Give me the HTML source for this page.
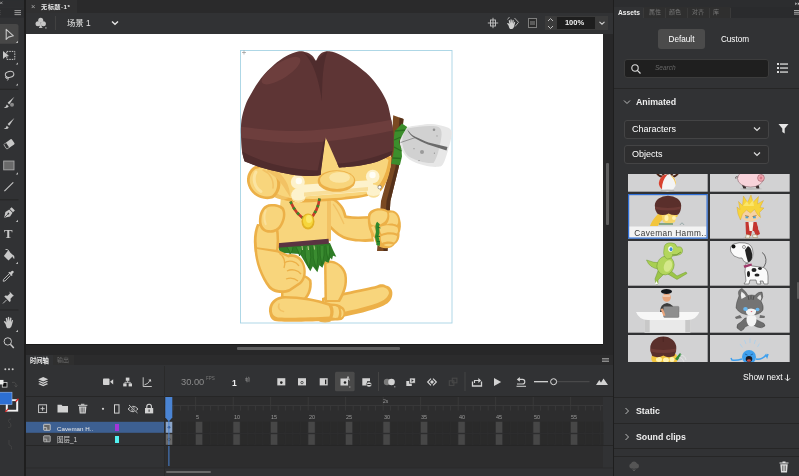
<!DOCTYPE html>
<html><head><meta charset="utf-8">
<style>
*{box-sizing:border-box;margin:0;padding:0}
html,body{width:799px;height:476px;overflow:hidden;background:#1e1e1e;font-family:"Liberation Sans","Noto Sans CJK SC",sans-serif;color:#ddd}
.a{position:absolute}
#tb{left:0;top:0;width:24.200px;height:476px;background:#313234}
#tabbar{left:25.600px;top:0;width:587.400px;height:12.500px;background:#2a2a2b}
#tab{left:26px;top:0;width:50.500px;height:12.500px;background:#303031;font-size:6px;color:#e8e8e8;line-height:13px;font-weight:bold}
#scene{left:25.600px;top:12.500px;width:587.400px;height:21px;background:#313234}
#stagebg{left:25.600px;top:33.500px;width:587.400px;height:322.500px;background:#272728}
#stage{left:25.700px;top:33.600px;width:576.900px;height:310.100px;background:#fff;box-shadow:0 1px 0 #1a1a1a}
#rp{left:614px;top:0;width:185px;height:476px;background:#313234}
#tl{left:25.600px;top:354px;width:587.400px;height:122px;background:#313234}
.t{position:absolute;white-space:nowrap;will-change:transform}
svg{will-change:transform}
.tabz{top:8px;font-size:6px;line-height:9px;color:#777}
.dd{width:145px;height:19px;background:#2e2e2f;border:1px solid #444445;border-radius:3px}
</style></head><body>
<div id="tb" class="a"><svg width="24.200" height="476" viewBox="0 0 24.200 476" style="position:absolute;left:0;top:0">
<rect x="0" y="0" width="24.200" height="7" fill="#2d2e30"/><rect x="0" y="7.500" width="24.200" height="10" fill="#2c2d2f"/>
<path d="M0 1.500 l2.500 2.500 M2.500 1.500 l-2.500 2.500" stroke="#aaa" stroke-width="0.700"/>
<path d="M0 10 v6" stroke="#555" stroke-width="1" stroke-dasharray="1 1"/>
<path d="M14.500 10.500 h6.500 M14.500 12.500 h6.500 M14.500 14.500 h6.500" stroke="#aaa" stroke-width="0.900"/>
<rect x="-3" y="24" width="21.500" height="19.700" rx="2.500" fill="#474747"/>
<path d="M6.200 29.300 v10 l2.300-2.300 l4.900-1.300z" fill="none" stroke="#c8c8c8" stroke-width="1.100" stroke-linejoin="round"/>
<path d="M18 42.8 v-2.200 l-2.200 2.200z" fill="#bbb"/>
<path d="M3 50.800 v8 l2.200-2 l3.800-0.800z" fill="#c8c8c8"/>
<rect x="6.800" y="51.300" width="8" height="8" fill="none" stroke="#c8c8c8" stroke-width="1" stroke-dasharray="1.500 1"/>
<path d="M18 64.5 v-2.200 l-2.200 2.200z" fill="#bbb"/>
<ellipse cx="9.600" cy="74.300" rx="4.300" ry="2.900" fill="none" stroke="#c8c8c8" stroke-width="1" transform="rotate(-12 9.600 74.300)"/>
<path d="M7 76.300 q-2.300 0.500 -1 1.800 q1.400 0.900 2.200-0.500 q0.500 1.500 -0.800 2.800" fill="none" stroke="#c8c8c8" stroke-width="0.900"/>
<path d="M18 85.5 v-2.200 l-2.200 2.200z" fill="#bbb"/>
<rect x="0" y="88.700" width="18.500" height="1" fill="#262626"/>
<path d="M14.400 96.800 l-6.800 6 l1.600 1.600 z" fill="#c8c8c8"/><path d="M3.800 107.600 q2.200-0.300 3-3.200 l2 2 q-1.500 2 -5 1.200z" fill="#c8c8c8"/><circle cx="12" cy="104.800" r="2" fill="#8a8a8a"/>
<path d="M14.400 118 l-6.800 6 l1.600 1.600 z" fill="#c8c8c8"/><path d="M3.800 128.800 q2.200-0.300 3-3.200 l2 2 q-1.500 2 -5 1.200z" fill="#c8c8c8"/>
<g transform="rotate(-35 9 144)"><rect x="4" y="141" width="10" height="6.200" rx="1" fill="#c8c8c8"/><rect x="4.600" y="141.600" width="2.600" height="5" fill="#313234"/></g>
<rect x="3.700" y="161" width="10.300" height="8.800" fill="#6a6a6a" stroke="#a8a8a8" stroke-width="0.900"/>
<path d="M18 174.5 v-2.200 l-2.200 2.200z" fill="#bbb"/>
<path d="M4.400 191 L13.300 182.300" stroke="#c8c8c8" stroke-width="1.100"/>
<rect x="0" y="199.300" width="18.500" height="1" fill="#262626"/>
<g transform="rotate(45 9 213)"><path d="M6.700 207 h4.600 v2.600 h-4.600z" fill="#c8c8c8"/><path d="M6.700 210.300 h4.600 l1 4.500 l-3.300 5 l-3.300-5z" fill="#c8c8c8"/><path d="M9 214 v5" stroke="#313234" stroke-width="0.700"/><circle cx="9" cy="213.800" r="0.900" fill="#313234"/></g>
<path d="M18 222 v-2.200 l-2.200 2.200z" fill="#bbb"/>
<text x="4" y="238" font-family="Liberation Serif, serif" font-weight="bold" font-size="12.800" fill="#c8c8c8">T</text>
<path d="M8 250.500 l5.500 5 l-5 5 l-4.600-4.600z" fill="#c8c8c8"/><path d="M13 255 q2 1 1.200 4 q-1.200-1 -1.800-2.500z" fill="#c8c8c8"/><path d="M5.500 249.500 q3.500-0.500 4 3.500" stroke="#c8c8c8" stroke-width="0.900" fill="none"/>
<path d="M18 264 v-2.200 l-2.200 2.200z" fill="#bbb"/>
<path d="M13.700 271.500 q-1.300-1.300 -2.600 0 l-1 1 l-0.800-0.800 l-1 1 l3.400 3.400 l1-1 l-0.800-0.800 l1-1 q1.400-1.300 0.800-1.800z" fill="#c8c8c8"/><path d="M9 274 l-5.500 5.500 l-0.300 1.800 l1.800-0.300 l5.500-5.500" fill="none" stroke="#c8c8c8" stroke-width="0.900"/>
<path d="M9.500 291.500 l4.500 4.500 l-1.200 0.400 l-2.300 2.300 l0.200 2.300 l-1 1 l-5.400-5.400 l1-1 l2.300 0.200 l2.300-2.300z" fill="#c8c8c8"/><path d="M6.500 300 l-3.500 3.500" stroke="#c8c8c8" stroke-width="0.900"/>
<rect x="0" y="309.500" width="18.500" height="1" fill="#262626"/>
<path d="M5.500 324 l-1.700-2.300 q0.700-1 1.700-0.200 l1 1 l-0.800-4.300 q0.800-0.800 1.400 0.200 l0.700 3 l0-4.200 q0.900-0.700 1.400 0.200 l0.300 4 l0.700-3.600 q0.900-0.500 1.300 0.400 l-0.400 4 l1-2.200 q0.800-0.300 1 0.500 l-1.200 4.500 q-0.500 2.500 -2.200 3.200 h-2.400 q-1 -0.800 -1.800-4.200z" fill="#c8c8c8"/>
<path d="M18 332 v-2.200 l-2.200 2.200z" fill="#bbb"/>
<circle cx="7.800" cy="341.500" r="3.700" fill="none" stroke="#c8c8c8" stroke-width="1"/><path d="M10.400 344.300 l3.400 3.700" stroke="#c8c8c8" stroke-width="1.500"/>
<circle cx="5.300" cy="369.200" r="1" fill="#c8c8c8"/><circle cx="9" cy="369.200" r="1" fill="#c8c8c8"/><circle cx="12.700" cy="369.200" r="1" fill="#c8c8c8"/>
<rect x="2.300" y="382.500" width="4.700" height="4.700" fill="#111" stroke="#ddd" stroke-width="0.800"/><rect x="-1" y="380" width="4.500" height="4.500" fill="#eee"/>
<path d="M12 382.500 q3-1 4 1.500 v3 M14.500 385.500 l1.500 1.700 l1.500-1.700" fill="none" stroke="#4c4c4c" stroke-width="0.900"/>
<rect x="6.800" y="400.300" width="10.400" height="10.400" fill="#313234" stroke="#f2f2f2" stroke-width="2"/><path d="M5.300 412 L18.500 398.800" stroke="#e02020" stroke-width="1.300"/><rect x="8" y="401.500" width="8" height="8" fill="#313234"/>
<rect x="-1" y="392.300" width="13" height="12.200" fill="#2d6fd2" stroke="#9bbcf0" stroke-width="0.600"/>
<path d="M11 419 q-3 0 -2.500 2.500 q3 2 2.500 5 q-1 1.500 -3 1" fill="none" stroke="#444" stroke-width="0.900"/>
<path d="M9 440 v5 q3 0 2.500 4.500" fill="none" stroke="#444" stroke-width="0.900"/>
</svg></div>
<div id="tabbar" class="a"></div>
<div id="tab" class="a"><span class="t" style="left:4.500px;top:-0.500px;font-weight:normal;color:#aaa;font-size:7.500px">×</span><span class="t" style="left:14.500px;top:-0.500px;letter-spacing:0.500px;font-size:6.200px">无标题-1*</span></div>
<div id="scene" class="a">
<svg class="a" style="left:9px;top:4.500px" width="13" height="13" viewBox="0 0 13 13"><g fill="#c6c6c6"><circle cx="5.700" cy="3.300" r="2.500"/><circle cx="3" cy="6.800" r="2.500"/><circle cx="8.400" cy="6.800" r="2.500"/><path d="M5.700 5 l1.300 5.500 h-2.600z"/><rect x="4" y="10" width="3.400" height="0.900"/><rect x="10.300" y="10.300" width="1.200" height="1.200"/></g></svg>
<div class="a" style="left:29.500px;top:3.500px;width:1px;height:14px;background:#414141"></div>
<span class="t" style="left:41.500px;top:3px;font-size:8.400px;line-height:14px;color:#e6e6e6">场景 1</span>
<svg class="a" style="left:85px;top:7.500px" width="8" height="6" viewBox="0 0 8 6"><path d="M1 1.500 L4 4.300 L7 1.500" fill="none" stroke="#e6e6e6" stroke-width="1.400"/></svg>
<svg class="a" style="left:461px;top:4px" width="12" height="12" viewBox="0 0 12 12"><g fill="none" stroke="#c8c8c8" stroke-width="0.900"><rect x="3.500" y="3" width="5" height="6"/><path d="M6 0.800 v10.400 M0.800 6 h10.400"/></g></svg>
<svg class="a" style="left:479px;top:3px" width="15" height="14" viewBox="0 0 15 14"><path d="M3.500 9.500 l-1.500-2 q0.600-0.900 1.500-0.200 l0.900 0.900 l-0.700-3.800 q0.700-0.700 1.200 0.200 l0.600 2.600 l0-3.700 q0.800-0.600 1.200 0.200 l0.300 3.500 l0.600-3.200 q0.800-0.400 1.100 0.400 l-0.300 3.500 l0.900-2 q0.700-0.300 0.900 0.400 l-1 4 q-0.500 2.200 -2 2.800 h-2.100 q-0.900-0.700 -1.600-3.600z" fill="#d0d0d0"/><path d="M9.500 2 l4 4.300 l-3.500 4.200" fill="none" stroke="#b0b0b0" stroke-width="1"/><path d="M2.500 3.500 l2-2.500" stroke="#b0b0b0" stroke-width="0.900"/></svg>
<div class="a" style="left:502px;top:5.500px;width:9.500px;height:9.500px;background:#2a2a2a;border:1.500px solid #7e7e7e"></div>
<div class="a" style="left:504.500px;top:8px;width:4.500px;height:4.500px;background:#5a5a5a"></div>
<div class="a" style="left:519.500px;top:3.500px;width:11px;height:14px;background:#3b3b3b"></div>
<svg class="a" style="left:521.500px;top:4px" width="7" height="13" viewBox="0 0 7 13"><path d="M1 4 L3.500 1.500 L6 4 M1 9 L3.500 11.500 L6 9" fill="none" stroke="#bdbdbd" stroke-width="1"/></svg>
<div class="a" style="left:530.500px;top:3.500px;width:40px;height:14px;background:#1e1e1e;border:1px solid #3a3a3a"></div>
<span class="t" style="left:530.500px;top:3.500px;width:40px;text-align:center;font-size:7.500px;line-height:14px;color:#f2f2f2;font-weight:bold;text-indent:-3px">100%</span>
<div class="a" style="left:570.500px;top:3.500px;width:12px;height:14px;background:#3b3b3b"></div>
<svg class="a" style="left:572px;top:7.500px" width="8" height="6" viewBox="0 0 8 6"><path d="M1.500 1.800 L4 4.200 L6.500 1.800" fill="none" stroke="#d0d0d0" stroke-width="1.100"/></svg>
</div>
<div id="stagebg" class="a"></div>
<div id="stage" class="a"></div>
<!--CHAR--><svg class="a" style="left:230px;top:40px" width="240" height="300" viewBox="230 40 240 300">
<defs>
<clipPath id="hairclip"><path id="hairp" d="M244.5 161.3 C244.1 159.6 242.6 155.4 242.0 151.0 C241.4 146.6 241.1 140.2 241.0 135.0 C240.9 129.8 240.8 125.0 241.5 120.0 C242.2 115.0 243.9 109.3 245.5 105.0 C247.1 100.7 248.4 98.5 251.0 94.0 C253.6 89.5 257.4 82.8 261.2 78.0 C265.0 73.2 269.6 68.7 273.8 65.0 C278.0 61.3 282.4 58.2 286.4 56.0 C290.4 53.8 294.7 52.1 298.0 51.5 C301.3 50.9 303.7 51.6 306.0 52.3 C308.3 53.0 310.3 54.0 312.0 55.5 C313.7 57.0 315.3 60.1 316.0 61.0 C316.5 60.1 317.8 57.0 319.0 55.5 C320.2 54.0 321.5 53.0 323.0 52.3 C324.5 51.6 326.2 51.3 328.0 51.3 C329.8 51.3 331.4 51.4 334.0 52.3 C336.6 53.2 340.1 54.6 343.8 56.7 C347.5 58.8 352.2 61.9 356.4 65.0 C360.6 68.2 365.4 72.0 369.0 75.6 C372.6 79.2 375.5 82.9 378.0 86.4 C380.5 89.9 382.5 93.2 384.2 96.4 C385.9 99.6 386.9 101.6 388.0 105.3 C389.1 109.0 390.1 114.2 391.0 118.7 C391.9 123.2 392.9 127.8 393.3 132.0 C393.7 136.2 393.7 141.0 393.6 144.0 C393.5 147.0 393.2 148.2 392.8 150.0 C392.4 151.8 391.7 154.2 391.5 155.0 C388.9 156.2 381.8 160.2 376.0 162.0 C370.2 163.8 363.2 165.1 357.0 166.0 C350.8 166.9 342.0 167.2 339.0 167.5 L325.6 137 L320.5 175 C319.1 175.2 316.1 175.9 312.0 176.0 C307.9 176.1 302.0 176.1 296.0 175.3 C290.0 174.5 282.3 172.8 276.0 171.3 C269.7 169.8 263.2 168.2 258.0 166.5 C252.8 164.8 246.8 162.2 244.5 161.3 Z"/></clipPath>
</defs>
<!-- selection box -->
<rect x="240.500" y="50.500" width="211.500" height="272.500" fill="none" stroke="#a6d3e4" stroke-width="0.900"/>
<path d="M242 52.500 h4 M244 50.500 v4" stroke="#888" stroke-width="0.600"/>
<!-- stick -->
<path d="M393.200 115.300 L403.500 119 L398.800 167 L390.400 201 L387.500 251 L377 251 L381 201 L390.400 167Z" fill="#7a4922"/>
<path d="M399.500 117.500 L403.500 119 L398.800 167 L390.400 201 L387.500 251 L383.500 251 L386.500 201 L395.500 167Z" fill="#55311a"/>
<!-- stone -->
<path d="M407.2 127 C409.3 126.7 415.9 125.5 420.0 125.0 C424.1 124.5 427.4 123.8 431.5 124.0 C435.6 124.2 441.5 125.6 444.7 126.5 C447.9 127.4 449.3 128.2 450.5 129.5 C451.7 130.8 452.2 131.2 451.8 134.5 C451.4 137.8 449.8 144.1 448.4 149.0 C447.0 153.9 445.0 160.8 443.2 163.8 C441.4 166.8 440.6 166.6 437.4 166.8 C434.2 167.1 428.7 166.5 424.0 165.3 C419.3 164.1 413.1 161.9 409.4 159.4 C405.7 156.9 403.6 153.5 402.0 150.6 C400.4 147.7 399.8 144.7 399.9 141.8 C400.0 138.9 401.3 135.5 402.5 133.0 C403.7 130.5 406.4 128.0 407.2 127.0 Z" fill="#e7e7e7"/>
<path d="M407.500 128.500 C418 126.500 428 125.500 437 126.500 C443 128 442 135 440.500 142 C439 150 437 158 433.500 163 C425 163.500 415 160.500 408 156 C403 150 401.500 144 402.500 138 C403 134 405 130.500 407.500 128.500Z" fill="#d1d1d1"/>
<path d="M400.600 142.500 L415.300 137.600" fill="none" stroke="#8a8a8a" stroke-width="0.900"/>
<path d="M407.200 129.300 C410 133 412 135.500 415.300 136.800 C420 139 424 141 428.500 142.500 L447.500 147 L446.500 150.500 L428 144.500 C423 142.500 419 140.500 414.500 138 C411 136 408.500 133 407.200 129.300Z" fill="#6a6a6a"/>
<circle cx="434" cy="129.700" r="1.300" fill="#909090"/><circle cx="437" cy="135.900" r="0.600" fill="#909090"/><circle cx="422" cy="152" r="2" fill="#9a9a9a"/><circle cx="414" cy="148.700" r="0.600" fill="#909090"/><circle cx="434.400" cy="153.200" r="0.600" fill="#909090"/><circle cx="419" cy="160.600" r="0.700" fill="#909090"/>
<!-- green ties -->
<path d="M402 123.400 L407.200 127 L403 134 L399 141.800 L401.500 149 L402 156.500 L399.900 165.300 L391 163.800 L393 156 L394 149 L393.500 140 L394.700 131.500Z" fill="#3c8e2c"/>
<path d="M395 131 L405 130 M394 140 L401 137 M394 147 L401.500 151 M392.500 158 L401 158.500" stroke="#2b6f20" stroke-width="1.300"/>
<!-- far foot -->
<path d="M322 298 C335 293.500 365 289 377 285.500 C380 283.500 384 284 386 285.500 C391 286.500 393.500 291 392 296.500 C390.500 302 386 305 379 307.500 C366 312 348 316.500 336 317.500 L322 317.500Z" fill="#ecb048"/>
<path d="M324 300.500 C337 296 366 291.500 378 288 C384 286 388.500 288.500 389 293 C388 297.500 384 300.500 377.500 303 C364 307.500 348 311.500 336 313 L324 313.500Z" fill="#f8d57c"/>
<!-- far leg -->
<path d="M324 262 C330 258 343 262 346.500 274 C348.500 285 345 293 340 302 L324.500 302Z" fill="#ecb048"/>
<path d="M326.500 264 C331 261 341 264 344 274.500 C346 284 342.500 292 338 300 L327 300Z" fill="#f8d57c"/>
<!-- near leg (thigh) -->
<path d="M281 284 C288 274 304 270 311.500 280 C313 290 309 297 304 302 L281 302Z" fill="#ecb048"/>
<path d="M283.500 285 C290 277 303 273.500 309 281 C310 289.500 306.500 296 302 300 L283.500 300Z" fill="#f8d57c"/>
<!-- shadow -->
<ellipse cx="325" cy="321" rx="6" ry="1.500" fill="#e9b55a"/>
<!-- near foot -->
<path d="M269.300 313 C267.500 303 275 296 285 296 C300 296 318 299 331 303.500 C336 303.500 340 304.500 342 306.500 C346.500 308.500 346.500 317.500 341.500 320 C330 321.500 290 322 279 321.500 C272.500 321.500 270 318 269.300 313Z" fill="#ecb048"/>
<path d="M272 311.500 C271 304 277 298.600 285.500 298.600 C300 298.600 316 301.500 328.500 305.800 C330.500 309 331 313 329.500 316.500 C315 317.500 290 318 279.500 317.500 C275 317.500 272.500 315 272 311.500Z" fill="#f8d57c"/>
<path d="M332.500 306 C335 305.700 337 306.300 338 307.500 C339.500 310.500 339.500 314.500 338 317.500 C336.500 318 334.500 318 332.500 317.500 C334 314 334 309.500 332.500 306Z" fill="#f8d57c"/>
<path d="M340.500 308.500 C342.500 309.500 343.500 311 343.500 313 C343.500 315.500 342.500 317 340.800 317.800 C341.800 315 341.800 311.500 340.500 308.500Z" fill="#f8d57c"/>
<path d="M279 304 C277.500 307.500 279.500 311 283.500 311.500" fill="none" stroke="#f2c264" stroke-width="1.600" stroke-linecap="round"/>
<!-- far arm -->
<path d="M322 197 C330 194 339 200 343.500 207.500 C345.500 211 346 214 346.500 215.500 C354 217 362 216.500 370 216 L374 241.500 C362 242.500 350 241.500 343 238.500 C336 235 330 229 326 224Z" fill="#ecb048"/>
<path d="M324 199.500 C330 197.500 337 202 341 208.500 C343 212 343.500 215.500 344.500 218 C353 219.500 362 219 369 218.500 L371.500 238.500 C361 240 351 239 344 236 C338 233 332.500 228 329 223Z" fill="#f8d57c"/>
<path d="M333 204 C338 210 341 218 344 224" fill="none" stroke="#f2c264" stroke-width="1.300"/>
<!-- torso -->
<path d="M281 197 L331 195 L331 241 L276 245Z" fill="#f8d57c"/>
<path d="M327 198 L331 197 L331 241 L327 241.300Z" fill="#f2c264"/>
<!-- skirt -->
<path d="M278 246 L330 243 L333 250 L336.300 256.700 L333 255.700 L332 259.700 L330.500 257.700 L328.500 262.700 L325 261.200 L322.400 267.800 L319.400 265.300 L317.400 272.300 L312.800 266.300 L310.300 271.300 L304.800 262 L300 254 L280 252.700Z" fill="#2f7d27"/>
<path d="M287 247 Q290 251 290 254 Q293 251 293 247 M296 247 Q299 252 299.500 256 Q302.500 252 302 247 M305 247 Q304 257 309 268 Q312 258 310 247 M313 246.500 Q312 258 316.500 269 Q319 257 317 246.500 M320 246 Q319.500 256 322 265 Q325 255 324 246 M326 245.500 Q326 253 328.300 260 Q330.500 253 329.500 245.500" fill="#3a8c30" stroke="#236a1d" stroke-width="0.700"/>
<path d="M302 246 l0.500 4 M308 246 l0.500 4 M314 245.500 l0.500 4" stroke="#f2e6b0" stroke-width="0.700"/>
<!-- belt -->
<path d="M277 243.300 L328.500 238.800 L329 243.700 L277.500 247.800Z" fill="#5b3342"/>
<!-- fist -->
<path d="M368 215 C370 208 381 206.500 388 210.500 C394 209.500 399 213 400 219 C401.500 224 401 229 399.500 233 C400 238 398 242 395 244 C393 247.500 388 249 383.500 248 C378 247 375 243 374.500 238 C370 234 367 226 368 215Z" fill="#ecb048"/>
<path d="M370.500 216 C372 210.500 381 209 387 212.500 C388.500 217 386 222 381 224 C377 226 373 226 371 224 C370 221 370 218.500 370.500 216Z" fill="#f8d57c"/>
<path d="M389 213 C393 211.500 397 214 398 219 C398.500 222 398 224 397 225 C393 223 389.500 223 386.500 224.500 C389 221 390 217 389 213Z" fill="#f8d57c"/>
<path d="M380 227 C386 224.500 393 225 397.500 227.500 C398.500 230 398 232 397 233.500 C392 231.500 386 232 381.500 234 C380 232 379.500 229.500 380 227Z" fill="#f8d57c"/>
<path d="M381 236.500 C386 234 392.500 234 397 236 C397 239 396 241 394 242.500 C390 241 385.500 241.500 382 243 C381 241 380.500 238.500 381 236.500Z" fill="#f8d57c"/>
<path d="M383.500 245 C386.500 243.500 390 243.500 393 244.500 C391 246.500 387 247 383.500 245Z" fill="#f8d57c"/>
<path d="M372.500 226.500 C374 230 376 234 377 238" fill="none" stroke="#f8d57c" stroke-width="3"/>
<path d="M378.500 223 C375 227 379.500 231 377 235 C375.500 238 379.500 241 378 245.500" fill="none" stroke="#2f8a2c" stroke-width="3.600"/>
<path d="M377.500 227 l3 1 M376.500 236 l3.500 0.500 M377 241.500 l3 0" stroke="#1f6a1f" stroke-width="0.900"/>
<!-- face -->
<path d="M262 163 C262 180 268 194 282 199.500 C292 203 305 203 320 201.500 C350 200 372 197 381 191 C388 182 391 170 391.500 157 L340 130 L300 130Z" fill="#ecb048"/>
<path d="M262 163 C262 180 270 192 283 197 C300 200 340 198 362 195 C376 192 385 182 388.500 160 L340 130 L300 130Z" fill="#f8d57c"/>
<path d="M258 168 C260 184 272 195 290 197.500 L283 200 C268 197 258 187 255 172Z" fill="#f2c264"/>
<path d="M254 166.500 C248.500 170 246 177 247.300 183 C249 190.500 254 195.500 260.500 198 C265 199.500 270 199.500 273.500 198 C280 193 282 184 279 176 C276 170 268 165 262 164.500Z" fill="#ecb048"/>
<path d="M255.500 169 C251 172 249 178 250 183 C251.500 189 255.500 193.500 261.500 195.500 C265 196.800 269 196.800 272 195.500 C277 191.500 278.500 184 276 177.500 C273.500 172 267 168 261.500 167.500Z" fill="#f8d57c"/>
<path d="M256 172 C252.500 178 254 187 261 191.500" fill="none" stroke="#fbe4a0" stroke-width="3" stroke-linecap="round"/>
<path d="M263 170 C270 173 274 180 273 188" fill="none" stroke="#f2c264" stroke-width="1.500" stroke-linecap="round"/>
<path d="M268 167 C282 172 291 185 290 197 C300 200 330 199 345 197 L345 168Z" fill="#f8d57c"/>
<path d="M272 168 C284 174 290.500 186 290 197 C285 189 279 177 266 171Z" fill="#f2c264"/>
<!-- bone -->
<g fill="#fdf2cc"><circle cx="297.800" cy="182" r="7"/><circle cx="298.500" cy="195.300" r="7.300"/><circle cx="372.700" cy="176.500" r="6.800"/><circle cx="373.400" cy="191.300" r="6.800"/><path d="M298 185 L373 180 L373 191 L298 197Z"/></g>
<path d="M304 196.500 L368 190.800 L368 187 L304 192.500Z" fill="#f8de9a"/>
<path d="M291.500 198.500 C294 203 302 204 305.500 198.500 C301 201 295 201 291.500 198.500Z M367 194 C370 198.500 377.500 199 380 194 C376 196.500 371 196.500 367 194Z" fill="#f8de9a"/>
<circle cx="298.800" cy="181" r="3.200" fill="#fffef6"/><circle cx="372.500" cy="175" r="3.200" fill="#fffef6"/>
<!-- nose -->
<ellipse cx="336.500" cy="181" rx="18.800" ry="10.800" fill="#ecb048"/>
<ellipse cx="337" cy="180" rx="17" ry="9" fill="#f8d57c"/>
<ellipse cx="339.600" cy="177.400" rx="10.400" ry="5.400" fill="#fbe6a6"/>
<circle cx="379.700" cy="187.200" r="1.800" fill="#fff" stroke="#666" stroke-width="0.600"/>
<!-- hair -->
<path d="M244.5 161.3 C244.1 159.6 242.6 155.4 242.0 151.0 C241.4 146.6 241.1 140.2 241.0 135.0 C240.9 129.8 240.8 125.0 241.5 120.0 C242.2 115.0 243.9 109.3 245.5 105.0 C247.1 100.7 248.4 98.5 251.0 94.0 C253.6 89.5 257.4 82.8 261.2 78.0 C265.0 73.2 269.6 68.7 273.8 65.0 C278.0 61.3 282.4 58.2 286.4 56.0 C290.4 53.8 294.7 52.1 298.0 51.5 C301.3 50.9 303.7 51.6 306.0 52.3 C308.3 53.0 310.3 54.0 312.0 55.5 C313.7 57.0 315.3 60.1 316.0 61.0 C316.5 60.1 317.8 57.0 319.0 55.5 C320.2 54.0 321.5 53.0 323.0 52.3 C324.5 51.6 326.2 51.3 328.0 51.3 C329.8 51.3 331.4 51.4 334.0 52.3 C336.6 53.2 340.1 54.6 343.8 56.7 C347.5 58.8 352.2 61.9 356.4 65.0 C360.6 68.2 365.4 72.0 369.0 75.6 C372.6 79.2 375.5 82.9 378.0 86.4 C380.5 89.9 382.5 93.2 384.2 96.4 C385.9 99.6 386.9 101.6 388.0 105.3 C389.1 109.0 390.1 114.2 391.0 118.7 C391.9 123.2 392.9 127.8 393.3 132.0 C393.7 136.2 393.7 141.0 393.6 144.0 C393.5 147.0 393.2 148.2 392.8 150.0 C392.4 151.8 391.7 154.2 391.5 155.0 C388.9 156.2 381.8 160.2 376.0 162.0 C370.2 163.8 363.2 165.1 357.0 166.0 C350.8 166.9 342.0 167.2 339.0 167.5 L325.6 137 L320.5 175 C319.1 175.2 316.1 175.9 312.0 176.0 C307.9 176.1 302.0 176.1 296.0 175.3 C290.0 174.5 282.3 172.8 276.0 171.3 C269.7 169.8 263.2 168.2 258.0 166.5 C252.8 164.8 246.8 162.2 244.5 161.3 Z" fill="#5e3535"/>
<g clip-path="url(#hairclip)">
<path d="M236 126 C262 130 285 131.500 300 131 C330 130 365 125 398 118.500 L398 129.500 C365 136.500 330 142.500 300 143 C285 143.500 262 141 236 137Z" fill="#6d3e3d"/>
<path d="M240 150 C262 164 295 170.500 321 170.500 L321 180 L240 180Z M337 163.500 C352 163 372 159 396 149.500 L396 175 L337 175Z" fill="#4f2c2d"/>
<ellipse cx="281" cy="70.600" rx="22.500" ry="7.800" transform="rotate(-32.600 281 70.600)" fill="#6d3e3d"/>
<path d="M300 50 C313 58 319 80 322 101.500 C322 80 323 62 328 50 L316 61Z" fill="#4f2c2d"/>
<path d="M334 52.300 C343.800 56.700 356.400 65 369 75.600 C378 86.400 388 105.300 391 118.700 L396 118 L380 70 L340 48Z" fill="#6d3e3d" opacity="0"/>
<path d="M325.600 137 L320.500 175 L316.500 176 L323.500 142Z" fill="#4f2c2d"/>
</g>
<!-- near upper arm -->
<path d="M257 224 C252.500 234 253 249 257 260 L278 255 C279.500 246 279.500 236 278 226Z" fill="#ecb048"/>
<path d="M259 226 C255.500 235 256 248 259.500 257 L275.500 253 C277 245 277 236 275.500 228Z" fill="#f8d57c"/>
<!-- near forearm + hand -->
<path d="M254.500 247 C254.500 262 261 278 268.500 288 C274 294 284 294 290 291.500 L301 284 C306.500 279.500 307 270 304 263 C301 256 294 253 288 254.500 L278 250Z" fill="#ecb048"/>
<path d="M257 249 C257.500 262 263 276.500 270.500 286 C275 291 283.500 291 289 289 L299.500 282 C304 278 304.500 270 302 264 C299 258 293.500 256 288.500 257.500 L277.500 252.500Z" fill="#f8d57c"/>
<path d="M284 263 C289 259.500 296 261 299 266 M287 271 C292 268.500 298 270 301 274 M286 279 C290 277.500 295 278.500 298 281" fill="none" stroke="#ecb048" stroke-width="1.300"/>
<path d="M279.500 253.500 C284 256 286 262 284 268" fill="none" stroke="#ecb048" stroke-width="1.300"/>
<!-- deltoid -->
<g transform="translate(272 218.500) scale(0.840 0.860) translate(-271 -218.500)">
<path d="M270 201.500 C261 201.500 256 209.500 255.500 219 C254.500 227 258 233.500 266 235 C273 236 279.500 233.500 283 227 C287 220.500 288.500 212 285 206 C281.500 202 276 201.500 270 201.500Z" fill="#ecb048"/>
<path d="M270 204.500 C263.500 204.500 259 211 258.500 219 C257.800 226 261 231 266.500 232 C272.500 232.800 277.500 230.500 280.500 225.500 C284 219.500 285.300 212.500 282.500 208 C279.500 205 275 204.500 270 204.500Z" fill="#f8d57c"/>
<path d="M263.500 209 C261.500 214 261.500 220 263.500 225" fill="none" stroke="#fae09a" stroke-width="2.400" stroke-linecap="round"/>
</g>
<!-- necklace -->
<path d="M290.500 201.500 C294 210 300 217 306 219.500 M319.500 198.500 C318.500 207 315 214 310 219" fill="none" stroke="#c63a2a" stroke-width="2.600"/>
<path d="M290.500 201.500 C294 210 300 217 306 219.500 M319.500 198.500 C318.500 207 315 214 310 219" fill="none" stroke="#3a8a2c" stroke-width="2.600" stroke-dasharray="2.500 4"/>
<ellipse cx="308" cy="221.500" rx="6.500" ry="8" fill="#e3b324"/>
<ellipse cx="308" cy="221" rx="5" ry="6.500" fill="#f6d63c"/>
<ellipse cx="309" cy="219" rx="3" ry="4" fill="#fbe76a"/>
</svg>
<!--/CHAR-->
<div class="a" style="left:237px;top:347px;width:163px;height:2.500px;background:#5e5e5e;border-radius:1px"></div>
<div class="a" style="left:606px;top:163px;width:2.500px;height:62px;background:#5e5e5e;border-radius:1px"></div>
<div id="tl" class="a"><div class="a" style="left:0;top:0;width:587px;height:1.300px;background:#272728"></div><div class="a" style="left:0;top:1.300px;width:587px;height:10.200px;background:#2b2b2c"></div><div class="a" style="left:0;top:1.300px;width:27px;height:10.200px;background:#313234"></div><div class="a" style="left:27.500px;top:1.300px;width:21px;height:10.200px;background:#2f2f2f"></div><svg class="a" style="left:0.400px;top:0" width="587" height="122" viewBox="0 0 587 122"><rect x="139.300" y="42.500" width="437.700" height="71.500" fill="#2d2d2e"/><rect x="0" y="67.800" width="139.300" height="11" fill="#3d6092"/><g fill="#d2d2d2"><path d="M17.2 23 l5 2.300 l-5 2.300 l-5-2.300z"/><path d="M12.2 27.6 l1.600-0.700 l3.400 1.600 l3.400-1.600 l1.600 0.700 l-5 2.300z"/><path d="M12.2 29.9 l1.600-0.700 l3.400 1.600 l3.400-1.600 l1.600 0.700 l-5 2.300z"/></g><rect x="77" y="24.6" width="6.500" height="6.400" rx="0.800" fill="#d2d2d2"/><path d="M84 27.8 l3.200-2.600 v5.200z" fill="#d2d2d2"/><g fill="#d2d2d2"><rect x="99.8" y="23.6" width="3.600" height="3.200"/><rect x="97.2" y="29.4" width="3.400" height="3"/><rect x="102.6" y="29.4" width="3.400" height="3"/><path d="M101.6 26.5 v2 M98.9 29.6 v-1.300 h5.400 v1.300" stroke="#d2d2d2" stroke-width="0.800" fill="none"/></g><path d="M117.2 23.3 v9.200 h8.600" fill="none" stroke="#d2d2d2" stroke-width="0.900"/><path d="M118.5 30.8 q3.500-0.500 5.500-4.300" fill="none" stroke="#d2d2d2" stroke-width="0.900"/><path d="M122.3 25.8 l2.600-0.600 l0.300 2.700z" fill="#d2d2d2"/><rect x="12.6" y="50.8" width="8" height="7.800" fill="none" stroke="#d2d2d2" stroke-width="0.900"/><path d="M16.6 52.6 v4.200 M14.5 54.7 h4.200" stroke="#d2d2d2" stroke-width="0.900"/><path d="M31.5 50.8 h4 l1 1.300 h5.500 v6.500 h-10.500z" fill="#d2d2d2"/><path d="M52 51.3 h9.400 M55 50.3 h3.400" stroke="#d2d2d2" stroke-width="1"/><path d="M53 52.5 h7.400 l-0.700 7 h-6z" fill="#d2d2d2"/><path d="M55.2 53.5 v5 M56.7 53.5 v5 M58.2 53.5 v5" stroke="#313234" stroke-width="0.600"/><circle cx="77" cy="54.8" r="1.100" fill="#d2d2d2"/><rect x="88.5" y="50.8" width="4.500" height="8.300" fill="none" stroke="#d2d2d2" stroke-width="1"/><path d="M102 55 q5-5.500 10 0 q-5 5.500 -10 0z" fill="none" stroke="#d2d2d2" stroke-width="0.900"/><circle cx="107" cy="55" r="1.700" fill="#d2d2d2"/><path d="M103 51 l8.500 8" stroke="#313234" stroke-width="2"/><path d="M103 51 l8.500 8" stroke="#d2d2d2" stroke-width="0.900"/><rect x="119" y="54" width="8.200" height="5.400" fill="#d2d2d2"/><path d="M120.8 54 v-1.500 a2.300 2.300 0 0 1 4.600 0 v1.500" fill="none" stroke="#d2d2d2" stroke-width="1.100"/><rect x="122.6" y="55.5" width="1" height="2.300" fill="#313234"/><rect x="17.7" y="70.3" width="6.500" height="6" rx="0.500" fill="#666" stroke="#dcdcdc" stroke-width="0.800"/><path d="M17.7 73.6 h3 v2.700" fill="none" stroke="#dcdcdc" stroke-width="0.700"/><rect x="17.7" y="81.8" width="6.500" height="6" rx="0.500" fill="#666" stroke="#c4c4c4" stroke-width="0.800"/><path d="M17.7 85.1 h3 v2.700" fill="none" stroke="#c4c4c4" stroke-width="0.700"/><rect x="251.3" y="24.2" width="8" height="7.200" fill="#d2d2d2"/><circle cx="255.3" cy="28.6" r="1.300" fill="#222"/><rect x="272" y="24.2" width="8" height="7.200" fill="#d2d2d2"/><circle cx="276" cy="28.6" r="1.200" fill="none" stroke="#222" stroke-width="0.700"/><rect x="293.7" y="24.2" width="8" height="7.200" fill="#d2d2d2"/><rect x="299" y="25.6" width="1.300" height="4.600" fill="#222"/><rect x="309" y="17.8" width="19.600" height="19.500" rx="1.500" fill="#4a4a4a"/><rect x="314.5" y="24.5" width="7.500" height="7" fill="#d2d2d2"/><circle cx="319" cy="28.5" r="1.300" fill="#222"/><path d="M320.5 26.5 l1.500-4 l1.500 4 M321 25.3 h2" stroke="#d2d2d2" stroke-width="0.800" fill="none"/><rect x="323.3" y="32.5" width="1" height="1" fill="#d2d2d2"/><path d="M336.3 24.2 h7.700 v3 h-3 v4.200 h-4.700z" fill="#d2d2d2"/><circle cx="343" cy="30.5" r="2.600" fill="#d2d2d2" stroke="#313234" stroke-width="0.600"/><rect x="341.3" y="30" width="3.400" height="1" fill="#222"/><rect x="352" y="18" width="1" height="19" fill="#444"/><circle cx="361" cy="28" r="3.200" fill="#7a7a7a"/><circle cx="365.5" cy="28" r="3.300" fill="#d2d2d2"/><rect x="368.3" y="32.3" width="1" height="1" fill="#d2d2d2"/><rect x="380.3" y="27" width="5.500" height="5" fill="#d2d2d2"/><rect x="383.5" y="24" width="5.800" height="5.200" fill="#d2d2d2" stroke="#313234" stroke-width="0.700"/><path d="M385.5 25.3 l2.300 1.300 l-2.300 1.300z" fill="#313234"/><path d="M405 24.7 l-3.300 3.300 l3.300 3.300 M407 24.7 l3.300 3.300 l-3.300 3.300" fill="none" stroke="#d2d2d2" stroke-width="1.200"/><path d="M404 28 l2-2 l2 2 l-2 2z" fill="#d2d2d2"/><rect x="423.3" y="26.8" width="4.600" height="4.600" fill="none" stroke="#484848" stroke-width="1.100"/><rect x="426.3" y="24.2" width="4.600" height="4.600" fill="none" stroke="#484848" stroke-width="1.100"/><rect x="438.5" y="18" width="1" height="19" fill="#444"/><path d="M446.5 27.5 v4.500 h9 v-4.500" fill="none" stroke="#d2d2d2" stroke-width="1.300"/><path d="M448.5 29 v-2.500 h4.500" fill="none" stroke="#d2d2d2" stroke-width="1.100"/><path d="M452.3 24 l2.800 2.500 l-2.800 2.500z" fill="#d2d2d2"/><path d="M468 24 l7.200 4 l-7.200 4z" fill="#d2d2d2"/><path d="M491 30 h5.500 a2.300 2.300 0 0 0 0-4.600 h-3.500" fill="none" stroke="#d2d2d2" stroke-width="1.100"/><path d="M493.8 23 l-3 2.400 l3 2.400z" fill="#d2d2d2"/><path d="M490.5 32.3 h9.500" stroke="#d2d2d2" stroke-width="1"/><path d="M508 27.7 h14" stroke="#e0e0e0" stroke-width="1.200"/><path d="M531 27.7 h32.500" stroke="#585858" stroke-width="0.800"/><circle cx="527.6" cy="27.7" r="3" fill="#313234" stroke="#e0e0e0" stroke-width="1"/><path d="M570 31 l3.300-5 l3.300 5z M573.5 31 l4-6.500 l4.500 6.500z" fill="#d2d2d2"/><rect x="139.80" y="67.8" width="6.50" height="11" fill="#2a2a2a"/><rect x="139.80" y="80.2" width="6.50" height="10.600" fill="#2a2a2a"/><rect x="139.30" y="52" width="0.700" height="4.500" fill="#3d3d3d"/><rect x="147.30" y="67.8" width="6.50" height="11" fill="#2a2a2a"/><rect x="147.30" y="80.2" width="6.50" height="10.600" fill="#2a2a2a"/><rect x="146.80" y="52" width="0.700" height="4.500" fill="#3d3d3d"/><rect x="154.80" y="67.8" width="6.50" height="11" fill="#2a2a2a"/><rect x="154.80" y="80.2" width="6.50" height="10.600" fill="#2a2a2a"/><rect x="154.30" y="52" width="0.700" height="4.500" fill="#3d3d3d"/><rect x="162.30" y="67.8" width="6.50" height="11" fill="#2a2a2a"/><rect x="162.30" y="80.2" width="6.50" height="10.600" fill="#2a2a2a"/><rect x="161.80" y="52" width="0.700" height="4.500" fill="#3d3d3d"/><rect x="169.80" y="67.8" width="6.50" height="11" fill="#474747"/><rect x="169.80" y="80.2" width="6.50" height="10.600" fill="#474747"/><rect x="169.30" y="52" width="0.700" height="4.500" fill="#3d3d3d"/><rect x="169.30" y="42.5" width="0.800" height="9" fill="#3d3d3d"/><rect x="177.30" y="67.8" width="6.50" height="11" fill="#2a2a2a"/><rect x="177.30" y="80.2" width="6.50" height="10.600" fill="#2a2a2a"/><rect x="176.80" y="52" width="0.700" height="4.500" fill="#3d3d3d"/><rect x="184.80" y="67.8" width="6.50" height="11" fill="#2a2a2a"/><rect x="184.80" y="80.2" width="6.50" height="10.600" fill="#2a2a2a"/><rect x="184.30" y="52" width="0.700" height="4.500" fill="#3d3d3d"/><rect x="192.30" y="67.8" width="6.50" height="11" fill="#2a2a2a"/><rect x="192.30" y="80.2" width="6.50" height="10.600" fill="#2a2a2a"/><rect x="191.80" y="52" width="0.700" height="4.500" fill="#3d3d3d"/><rect x="199.80" y="67.8" width="6.50" height="11" fill="#2a2a2a"/><rect x="199.80" y="80.2" width="6.50" height="10.600" fill="#2a2a2a"/><rect x="199.30" y="52" width="0.700" height="4.500" fill="#3d3d3d"/><rect x="207.30" y="67.8" width="6.50" height="11" fill="#474747"/><rect x="207.30" y="80.2" width="6.50" height="10.600" fill="#474747"/><rect x="206.80" y="52" width="0.700" height="4.500" fill="#3d3d3d"/><rect x="206.80" y="42.5" width="0.800" height="9" fill="#3d3d3d"/><rect x="214.80" y="67.8" width="6.50" height="11" fill="#2a2a2a"/><rect x="214.80" y="80.2" width="6.50" height="10.600" fill="#2a2a2a"/><rect x="214.30" y="52" width="0.700" height="4.500" fill="#3d3d3d"/><rect x="222.30" y="67.8" width="6.50" height="11" fill="#2a2a2a"/><rect x="222.30" y="80.2" width="6.50" height="10.600" fill="#2a2a2a"/><rect x="221.80" y="52" width="0.700" height="4.500" fill="#3d3d3d"/><rect x="229.80" y="67.8" width="6.50" height="11" fill="#2a2a2a"/><rect x="229.80" y="80.2" width="6.50" height="10.600" fill="#2a2a2a"/><rect x="229.30" y="52" width="0.700" height="4.500" fill="#3d3d3d"/><rect x="237.30" y="67.8" width="6.50" height="11" fill="#2a2a2a"/><rect x="237.30" y="80.2" width="6.50" height="10.600" fill="#2a2a2a"/><rect x="236.80" y="52" width="0.700" height="4.500" fill="#3d3d3d"/><rect x="244.80" y="67.8" width="6.50" height="11" fill="#474747"/><rect x="244.80" y="80.2" width="6.50" height="10.600" fill="#474747"/><rect x="244.30" y="52" width="0.700" height="4.500" fill="#3d3d3d"/><rect x="244.30" y="42.5" width="0.800" height="9" fill="#3d3d3d"/><rect x="252.30" y="67.8" width="6.50" height="11" fill="#2a2a2a"/><rect x="252.30" y="80.2" width="6.50" height="10.600" fill="#2a2a2a"/><rect x="251.80" y="52" width="0.700" height="4.500" fill="#3d3d3d"/><rect x="259.80" y="67.8" width="6.50" height="11" fill="#2a2a2a"/><rect x="259.80" y="80.2" width="6.50" height="10.600" fill="#2a2a2a"/><rect x="259.30" y="52" width="0.700" height="4.500" fill="#3d3d3d"/><rect x="267.30" y="67.8" width="6.50" height="11" fill="#2a2a2a"/><rect x="267.30" y="80.2" width="6.50" height="10.600" fill="#2a2a2a"/><rect x="266.80" y="52" width="0.700" height="4.500" fill="#3d3d3d"/><rect x="274.80" y="67.8" width="6.50" height="11" fill="#2a2a2a"/><rect x="274.80" y="80.2" width="6.50" height="10.600" fill="#2a2a2a"/><rect x="274.30" y="52" width="0.700" height="4.500" fill="#3d3d3d"/><rect x="282.30" y="67.8" width="6.50" height="11" fill="#474747"/><rect x="282.30" y="80.2" width="6.50" height="10.600" fill="#474747"/><rect x="281.80" y="52" width="0.700" height="4.500" fill="#3d3d3d"/><rect x="281.80" y="42.5" width="0.800" height="9" fill="#3d3d3d"/><rect x="289.80" y="67.8" width="6.50" height="11" fill="#2a2a2a"/><rect x="289.80" y="80.2" width="6.50" height="10.600" fill="#2a2a2a"/><rect x="289.30" y="52" width="0.700" height="4.500" fill="#3d3d3d"/><rect x="297.30" y="67.8" width="6.50" height="11" fill="#2a2a2a"/><rect x="297.30" y="80.2" width="6.50" height="10.600" fill="#2a2a2a"/><rect x="296.80" y="52" width="0.700" height="4.500" fill="#3d3d3d"/><rect x="304.80" y="67.8" width="6.50" height="11" fill="#2a2a2a"/><rect x="304.80" y="80.2" width="6.50" height="10.600" fill="#2a2a2a"/><rect x="304.30" y="52" width="0.700" height="4.500" fill="#3d3d3d"/><rect x="312.30" y="67.8" width="6.50" height="11" fill="#2a2a2a"/><rect x="312.30" y="80.2" width="6.50" height="10.600" fill="#2a2a2a"/><rect x="311.80" y="52" width="0.700" height="4.500" fill="#3d3d3d"/><rect x="319.80" y="67.8" width="6.50" height="11" fill="#474747"/><rect x="319.80" y="80.2" width="6.50" height="10.600" fill="#474747"/><rect x="319.30" y="52" width="0.700" height="4.500" fill="#3d3d3d"/><rect x="319.30" y="42.5" width="0.800" height="9" fill="#3d3d3d"/><rect x="327.30" y="67.8" width="6.50" height="11" fill="#2a2a2a"/><rect x="327.30" y="80.2" width="6.50" height="10.600" fill="#2a2a2a"/><rect x="326.80" y="52" width="0.700" height="4.500" fill="#3d3d3d"/><rect x="334.80" y="67.8" width="6.50" height="11" fill="#2a2a2a"/><rect x="334.80" y="80.2" width="6.50" height="10.600" fill="#2a2a2a"/><rect x="334.30" y="52" width="0.700" height="4.500" fill="#3d3d3d"/><rect x="342.30" y="67.8" width="6.50" height="11" fill="#2a2a2a"/><rect x="342.30" y="80.2" width="6.50" height="10.600" fill="#2a2a2a"/><rect x="341.80" y="52" width="0.700" height="4.500" fill="#3d3d3d"/><rect x="349.80" y="67.8" width="6.50" height="11" fill="#2a2a2a"/><rect x="349.80" y="80.2" width="6.50" height="10.600" fill="#2a2a2a"/><rect x="349.30" y="52" width="0.700" height="4.500" fill="#3d3d3d"/><rect x="357.30" y="67.8" width="6.50" height="11" fill="#474747"/><rect x="357.30" y="80.2" width="6.50" height="10.600" fill="#474747"/><rect x="356.80" y="52" width="0.700" height="4.500" fill="#3d3d3d"/><rect x="356.80" y="42.5" width="0.800" height="9" fill="#3d3d3d"/><rect x="364.80" y="67.8" width="6.50" height="11" fill="#2a2a2a"/><rect x="364.80" y="80.2" width="6.50" height="10.600" fill="#2a2a2a"/><rect x="364.30" y="52" width="0.700" height="4.500" fill="#3d3d3d"/><rect x="372.30" y="67.8" width="6.50" height="11" fill="#2a2a2a"/><rect x="372.30" y="80.2" width="6.50" height="10.600" fill="#2a2a2a"/><rect x="371.80" y="52" width="0.700" height="4.500" fill="#3d3d3d"/><rect x="379.80" y="67.8" width="6.50" height="11" fill="#2a2a2a"/><rect x="379.80" y="80.2" width="6.50" height="10.600" fill="#2a2a2a"/><rect x="379.30" y="52" width="0.700" height="4.500" fill="#3d3d3d"/><rect x="387.30" y="67.8" width="6.50" height="11" fill="#2a2a2a"/><rect x="387.30" y="80.2" width="6.50" height="10.600" fill="#2a2a2a"/><rect x="386.80" y="52" width="0.700" height="4.500" fill="#3d3d3d"/><rect x="394.80" y="67.8" width="6.50" height="11" fill="#474747"/><rect x="394.80" y="80.2" width="6.50" height="10.600" fill="#474747"/><rect x="394.30" y="52" width="0.700" height="4.500" fill="#3d3d3d"/><rect x="394.30" y="42.5" width="0.800" height="9" fill="#3d3d3d"/><rect x="402.30" y="67.8" width="6.50" height="11" fill="#2a2a2a"/><rect x="402.30" y="80.2" width="6.50" height="10.600" fill="#2a2a2a"/><rect x="401.80" y="52" width="0.700" height="4.500" fill="#3d3d3d"/><rect x="409.80" y="67.8" width="6.50" height="11" fill="#2a2a2a"/><rect x="409.80" y="80.2" width="6.50" height="10.600" fill="#2a2a2a"/><rect x="409.30" y="52" width="0.700" height="4.500" fill="#3d3d3d"/><rect x="417.30" y="67.8" width="6.50" height="11" fill="#2a2a2a"/><rect x="417.30" y="80.2" width="6.50" height="10.600" fill="#2a2a2a"/><rect x="416.80" y="52" width="0.700" height="4.500" fill="#3d3d3d"/><rect x="424.80" y="67.8" width="6.50" height="11" fill="#2a2a2a"/><rect x="424.80" y="80.2" width="6.50" height="10.600" fill="#2a2a2a"/><rect x="424.30" y="52" width="0.700" height="4.500" fill="#3d3d3d"/><rect x="432.30" y="67.8" width="6.50" height="11" fill="#474747"/><rect x="432.30" y="80.2" width="6.50" height="10.600" fill="#474747"/><rect x="431.80" y="52" width="0.700" height="4.500" fill="#3d3d3d"/><rect x="431.80" y="42.5" width="0.800" height="9" fill="#3d3d3d"/><rect x="439.80" y="67.8" width="6.50" height="11" fill="#2a2a2a"/><rect x="439.80" y="80.2" width="6.50" height="10.600" fill="#2a2a2a"/><rect x="439.30" y="52" width="0.700" height="4.500" fill="#3d3d3d"/><rect x="447.30" y="67.8" width="6.50" height="11" fill="#2a2a2a"/><rect x="447.30" y="80.2" width="6.50" height="10.600" fill="#2a2a2a"/><rect x="446.80" y="52" width="0.700" height="4.500" fill="#3d3d3d"/><rect x="454.80" y="67.8" width="6.50" height="11" fill="#2a2a2a"/><rect x="454.80" y="80.2" width="6.50" height="10.600" fill="#2a2a2a"/><rect x="454.30" y="52" width="0.700" height="4.500" fill="#3d3d3d"/><rect x="462.30" y="67.8" width="6.50" height="11" fill="#2a2a2a"/><rect x="462.30" y="80.2" width="6.50" height="10.600" fill="#2a2a2a"/><rect x="461.80" y="52" width="0.700" height="4.500" fill="#3d3d3d"/><rect x="469.80" y="67.8" width="6.50" height="11" fill="#474747"/><rect x="469.80" y="80.2" width="6.50" height="10.600" fill="#474747"/><rect x="469.30" y="52" width="0.700" height="4.500" fill="#3d3d3d"/><rect x="469.30" y="42.5" width="0.800" height="9" fill="#3d3d3d"/><rect x="477.30" y="67.8" width="6.50" height="11" fill="#2a2a2a"/><rect x="477.30" y="80.2" width="6.50" height="10.600" fill="#2a2a2a"/><rect x="476.80" y="52" width="0.700" height="4.500" fill="#3d3d3d"/><rect x="484.80" y="67.8" width="6.50" height="11" fill="#2a2a2a"/><rect x="484.80" y="80.2" width="6.50" height="10.600" fill="#2a2a2a"/><rect x="484.30" y="52" width="0.700" height="4.500" fill="#3d3d3d"/><rect x="492.30" y="67.8" width="6.50" height="11" fill="#2a2a2a"/><rect x="492.30" y="80.2" width="6.50" height="10.600" fill="#2a2a2a"/><rect x="491.80" y="52" width="0.700" height="4.500" fill="#3d3d3d"/><rect x="499.80" y="67.8" width="6.50" height="11" fill="#2a2a2a"/><rect x="499.80" y="80.2" width="6.50" height="10.600" fill="#2a2a2a"/><rect x="499.30" y="52" width="0.700" height="4.500" fill="#3d3d3d"/><rect x="507.30" y="67.8" width="6.50" height="11" fill="#474747"/><rect x="507.30" y="80.2" width="6.50" height="10.600" fill="#474747"/><rect x="506.80" y="52" width="0.700" height="4.500" fill="#3d3d3d"/><rect x="506.80" y="42.5" width="0.800" height="9" fill="#3d3d3d"/><rect x="514.80" y="67.8" width="6.50" height="11" fill="#2a2a2a"/><rect x="514.80" y="80.2" width="6.50" height="10.600" fill="#2a2a2a"/><rect x="514.30" y="52" width="0.700" height="4.500" fill="#3d3d3d"/><rect x="522.30" y="67.8" width="6.50" height="11" fill="#2a2a2a"/><rect x="522.30" y="80.2" width="6.50" height="10.600" fill="#2a2a2a"/><rect x="521.80" y="52" width="0.700" height="4.500" fill="#3d3d3d"/><rect x="529.80" y="67.8" width="6.50" height="11" fill="#2a2a2a"/><rect x="529.80" y="80.2" width="6.50" height="10.600" fill="#2a2a2a"/><rect x="529.30" y="52" width="0.700" height="4.500" fill="#3d3d3d"/><rect x="537.30" y="67.8" width="6.50" height="11" fill="#2a2a2a"/><rect x="537.30" y="80.2" width="6.50" height="10.600" fill="#2a2a2a"/><rect x="536.80" y="52" width="0.700" height="4.500" fill="#3d3d3d"/><rect x="544.80" y="67.8" width="6.50" height="11" fill="#474747"/><rect x="544.80" y="80.2" width="6.50" height="10.600" fill="#474747"/><rect x="544.30" y="52" width="0.700" height="4.500" fill="#3d3d3d"/><rect x="544.30" y="42.5" width="0.800" height="9" fill="#3d3d3d"/><rect x="552.30" y="67.8" width="6.50" height="11" fill="#2a2a2a"/><rect x="552.30" y="80.2" width="6.50" height="10.600" fill="#2a2a2a"/><rect x="551.80" y="52" width="0.700" height="4.500" fill="#3d3d3d"/><rect x="559.80" y="67.8" width="6.50" height="11" fill="#2a2a2a"/><rect x="559.80" y="80.2" width="6.50" height="10.600" fill="#2a2a2a"/><rect x="559.30" y="52" width="0.700" height="4.500" fill="#3d3d3d"/><rect x="567.30" y="67.8" width="6.50" height="11" fill="#2a2a2a"/><rect x="567.30" y="80.2" width="6.50" height="10.600" fill="#2a2a2a"/><rect x="566.80" y="52" width="0.700" height="4.500" fill="#3d3d3d"/><rect x="574.80" y="67.8" width="2.70" height="11" fill="#2a2a2a"/><rect x="574.80" y="80.2" width="2.70" height="10.600" fill="#2a2a2a"/><rect x="574.30" y="52" width="0.700" height="4.500" fill="#3d3d3d"/><rect x="139.3" y="67.8" width="437.7" height="23" fill="#313234" fill-opacity="0"/><rect x="139.3" y="51.3" width="437.7" height="0.700" fill="#3e3e3e"/><rect x="139.8" y="67.8" width="6.500" height="11" fill="#8aa4c8"/><circle cx="143" cy="73.3" r="1.300" fill="#2a4a80"/><rect x="139.8" y="80.2" width="6.500" height="10.600" fill="#6a6a6a"/><circle cx="143" cy="85.5" r="1.300" fill="none" stroke="#333" stroke-width="0.600"/><path d="M139.3 43 q0-0.700 0.700-0.700 h5.600 q0.700 0 0.700 0.700 v20.500 l-3.500 4 l-3.500-4z" fill="#4a84d4"/><rect x="142.4" y="67" width="1" height="45" fill="#4a84d4"/><rect x="0" y="113.5" width="587" height="0.800" fill="#2a2a2a"/><rect x="140" y="117" width="45" height="2" rx="1" fill="#6a6a6a"/></svg><span class="t" style="left:4px;top:1.500px;font-size:6.300px;line-height:9px;font-weight:bold;color:#f0f0f0">时间轴</span><span class="t" style="left:31.500px;top:1.500px;font-size:6px;line-height:9px;color:#6e6e6e">输出</span><div class="a" style="left:576.7px;top:4.3px;width:6.600px;height:1px;background:#8a8a8a;box-shadow:0 1.500px 0 #8a8a8a,0 3px 0 #8a8a8a"></div><div class="a" style="left:0;top:41.6px;width:587px;height:1px;background:#262626"></div><div class="a" style="left:0;top:90.8px;width:587px;height:1px;background:#262626"></div><span class="t" style="left:31.5px;top:69.500px;font-size:6.200px;line-height:10px;color:#e8e8e8">Caveman H..</span><span class="t" style="left:31.5px;top:81.200px;font-size:6.500px;line-height:10px;color:#d0d0d0">图层_1</span><div class="a" style="left:89.9px;top:69.8px;width:3.500px;height:7.300px;background:#a335d8"></div><div class="a" style="left:89.9px;top:81.5px;width:3.500px;height:7.500px;background:#52f0f0"></div><div class="a" style="left:138.3px;top:12px;width:1px;height:110px;background:#2a2a2a"></div><span class="t" style="left:155.3px;top:22px;font-size:9.300px;line-height:12px;color:#8c8c8c">30.00</span><span class="t" style="left:180.5px;top:21.5px;font-size:4.500px;line-height:6px;color:#777">FPS</span><span class="t" style="left:206px;top:22.5px;font-size:8.500px;line-height:12px;color:#f0f0f0;font-weight:bold">1</span><span class="t" style="left:219.5px;top:21.5px;font-size:5px;line-height:7px;color:#999">帧</span><span class="t" style="left:170.50px;top:58.5px;font-size:5.500px;line-height:8px;color:#9a9a9a">5</span><span class="t" style="left:208.00px;top:58.5px;font-size:5.500px;line-height:8px;color:#9a9a9a">10</span><span class="t" style="left:245.50px;top:58.5px;font-size:5.500px;line-height:8px;color:#9a9a9a">15</span><span class="t" style="left:283.00px;top:58.5px;font-size:5.500px;line-height:8px;color:#9a9a9a">20</span><span class="t" style="left:320.50px;top:58.5px;font-size:5.500px;line-height:8px;color:#9a9a9a">25</span><span class="t" style="left:358.00px;top:58.5px;font-size:5.500px;line-height:8px;color:#9a9a9a">30</span><span class="t" style="left:395.50px;top:58.5px;font-size:5.500px;line-height:8px;color:#9a9a9a">35</span><span class="t" style="left:433.00px;top:58.5px;font-size:5.500px;line-height:8px;color:#9a9a9a">40</span><span class="t" style="left:470.50px;top:58.5px;font-size:5.500px;line-height:8px;color:#9a9a9a">45</span><span class="t" style="left:508.00px;top:58.5px;font-size:5.500px;line-height:8px;color:#9a9a9a">50</span><span class="t" style="left:545.50px;top:58.5px;font-size:5.500px;line-height:8px;color:#9a9a9a">55</span><span class="t" style="left:357.5px;top:43.5px;font-size:5px;line-height:7px;color:#9a9a9a">2s</span></div>
<div id="rp" class="a">
<div class="a" style="left:0;top:0;width:185px;height:7px;background:#2c2d2f"></div>
<div class="a" style="left:0;top:7px;width:185px;height:11px;background:#2a2b2d"></div>
<div class="a" style="left:0;top:7px;width:30px;height:11px;background:#313234"></div>
<div class="a" style="left:30px;top:7px;width:87px;height:11px;background:#2f2f2f"></div>
<div class="a" style="left:29px;top:8px;width:1px;height:10px;background:#3a3a3a"></div>
<div class="a" style="left:51px;top:8px;width:1px;height:10px;background:#3a3a3a"></div>
<div class="a" style="left:73px;top:8px;width:1px;height:10px;background:#3a3a3a"></div>
<div class="a" style="left:95px;top:8px;width:1px;height:10px;background:#3a3a3a"></div>
<div class="a" style="left:116px;top:8px;width:1px;height:10px;background:#3a3a3a"></div>
<span class="t" style="left:4px;top:8px;font-size:6.700px;line-height:9px;font-weight:bold;color:#f0f0f0">Assets</span>
<span class="t tabz" style="left:35px">属性</span>
<span class="t tabz" style="left:55px">颜色</span>
<span class="t tabz" style="left:77.5px">对齐</span>
<span class="t tabz" style="left:99px">库</span>
<svg class="a" style="left:180.500px;top:1.800px" width="5" height="4" viewBox="0 0 5 4"><path d="M0.300 0.300 L2 1.800 L0.300 3.300Z M2.800 0.300 L4.500 1.800 L2.800 3.300Z" fill="#c8c8c8"/></svg>
<div class="a" style="left:179.800px;top:10.200px;width:6px;height:1.100px;background:#aaa;box-shadow:0 1.800px 0 #aaa,0 3.600px 0 #aaa"></div>
<div class="a" style="left:44px;top:29px;width:47px;height:20px;background:#4b4b4b;border-radius:3px"></div>
<span class="t" style="left:44px;top:30px;width:47px;text-align:center;font-size:8.200px;line-height:20px;color:#fff">Default</span>
<span class="t" style="left:97px;top:30px;width:48px;text-align:center;font-size:8.200px;line-height:20px;color:#fff">Custom</span>
<div class="a" style="left:10px;top:59px;width:145px;height:19px;background:#1f1f1f;border:1px solid #3c3c3c;border-radius:3px"></div>
<svg class="a" style="left:16px;top:63px" width="12" height="12" viewBox="0 0 12 12"><circle cx="5" cy="5" r="3.2" fill="none" stroke="#ddd" stroke-width="1.1"/><path d="M7.3 7.3 L10.5 10.5" stroke="#ddd" stroke-width="1.2"/></svg>
<span class="t" style="left:41px;top:63px;font-size:6.5px;line-height:10px;color:#666;font-style:italic">Search</span>
<svg class="a" style="left:163px;top:62px" width="12" height="12" viewBox="0 0 12 12"><g fill="#ddd"><rect x="0" y="1" width="2" height="2"/><rect x="0" y="5" width="2" height="2"/><rect x="0" y="9" width="2" height="2"/><rect x="3" y="1.4" width="8" height="1.3"/><rect x="3" y="5.4" width="8" height="1.3"/><rect x="3" y="9.4" width="8" height="1.3"/></g></svg>
<div class="a" style="left:0;top:88px;width:185px;height:1px;background:#262626"></div>
<svg class="a" style="left:9px;top:98px" width="8" height="8" viewBox="0 0 8 8"><path d="M1 2.5 L4 5.5 L7 2.5" fill="none" stroke="#bbb" stroke-width="1"/></svg>
<span class="t" style="left:21.5px;top:96px;font-size:8.800px;line-height:12px;font-weight:bold;color:#eee">Animated</span>
<div class="a dd" style="left:10px;top:119.5px"></div>
<span class="t" style="left:18px;top:123px;font-size:9px;line-height:12px;color:#fff">Characters</span>
<svg class="a" style="left:139px;top:125px" width="8" height="8" viewBox="0 0 8 8"><path d="M1 2.5 L4 5.5 L7 2.5" fill="none" stroke="#ddd" stroke-width="1.2"/></svg>
<svg class="a" style="left:164px;top:123px" width="11" height="12" viewBox="0 0 11 12"><path d="M0.5 1 H10.5 L6.7 5.5 V10.5 L4.3 9 V5.5 Z" fill="#e6e6e6"/></svg>
<div class="a dd" style="left:10px;top:144.5px"></div>
<span class="t" style="left:18px;top:148px;font-size:9px;line-height:12px;color:#fff">Objects</span>
<svg class="a" style="left:139px;top:150px" width="8" height="8" viewBox="0 0 8 8"><path d="M1 2.5 L4 5.5 L7 2.5" fill="none" stroke="#ddd" stroke-width="1.2"/></svg>
<div class="a" style="left:0;top:173.600px;width:185px;height:188.300px;overflow:hidden"><svg class="a" style="left:14px;top:-26.7px" width="79.7" height="44.7" viewBox="0 0 79.7 44.7"><rect width="79.7" height="44.7" fill="#d2d2d3"/><path d="M29 26.500 q3 4 7.500 3 M50 26.500 q-3 4 -7.500 3 M33.500 25 l3.500 5 M45.500 25 l-3.500 5 M39.500 25 v3" stroke="#4a2416" stroke-width="2" fill="none"/>
<circle cx="39.5" cy="36" r="8.5" fill="#f4f4f4"/><path d="M39.5 27.5 A8.5 8.5 0 0 0 34 42.5 Q33.5 34 39.5 27.5Z" fill="#d8412f"/><path d="M42 28 A8.5 8.5 0 0 1 47.5 38.5 Q47 32 42 28Z" fill="#f2c14a"/><ellipse cx="39.5" cy="43.5" rx="7" ry="1" fill="#bbb"/></svg><svg class="a" style="left:96px;top:-26.7px" width="79.7" height="44.7" viewBox="0 0 79.7 44.7"><rect width="79.7" height="44.7" fill="#d2d2d3"/><ellipse cx="41" cy="42" rx="11" ry="0.900" fill="#bdbdbd"/><path d="M32 38 l1.400 3.400 h2.800 l-0.500-3z M45 38.500 l1.600 3 h2.800 l-0.600-3.200z" fill="#3a3030"/><ellipse cx="40.500" cy="31.500" rx="13" ry="8.600" fill="#f8d3da" stroke="#6a4a50" stroke-width="0.500"/><circle cx="51" cy="31" r="3.400" fill="#f3a9b3" stroke="#8a4a55" stroke-width="0.500"/><circle cx="51" cy="31" r="1.400" fill="#d97a88"/><path d="M27.800 30 q-3-1 -1.800 1.800" stroke="#4a3a3a" stroke-width="0.800" fill="none"/></svg><svg class="a" style="left:14px;top:20.4px" width="79.7" height="44.7" viewBox="0 0 79.7 44.7"><rect width="79.7" height="44.7" fill="#d2d2d3"/><path d="M30 20 q-6 6 -8 12 h8 q2-6 8-8 q8 2 12-2 l-4-6z" fill="#f2c53d"/><path d="M33 19 h16 l-2 9 q-6 3 -12 0z" fill="#f6d56a"/><ellipse cx="38.5" cy="24" rx="2" ry="3" fill="#fff3b0"/><ellipse cx="46" cy="24" rx="2" ry="2" fill="#fff3b0"/><path d="M40 11.5 m-13.2 0 a13.2 9.8 0 0 1 26.4 0 q0 6 -3 9 q-5 1.5 -9.5 -1 q-6 3 -11.5 0 q-2.4 -3 -2.4 -8z" fill="#5a2f2b"/><path d="M27 12.5 q13 3 26 0 v2.5 q-13 3 -26 0z" fill="#6d3a35"/><path d="M31 30 h14" stroke="#3a7a3a" stroke-width="1"/><path d="M52 31 q2-4 4 0" stroke="#9aa" stroke-width="1" fill="none"/>
<rect x="1" y="32.5" width="77.7" height="11.5" fill="#fff" fill-opacity="0.72"/><text x="6.300" y="41.800" font-family="Liberation Sans, sans-serif" font-size="8.300" letter-spacing="0.400" fill="#363636">Caveman Hamm..</text>
<rect x="0.6" y="0.6" width="78.5" height="43.5" fill="none" stroke="#2f6fd8" stroke-width="1.2"/></svg><svg class="a" style="left:96px;top:20.4px" width="79.7" height="44.7" viewBox="0 0 79.7 44.7"><rect width="79.7" height="44.7" fill="#d2d2d3"/><ellipse cx="41" cy="43.800" rx="8" ry="0.800" fill="#bbb"/>
<path d="M35.500 28 h11 l3.500 12 l-4 2 l-2-5 l-2 0 l-1 5 l-5-1.500z" fill="#c4352f"/><path d="M38.500 28 h5 l-1 9 h-3z" fill="#f6f0e8"/><path d="M34.500 29 l-3 6 l2 1.500z M47.500 29 l3 6 l-2 1.500z" fill="#d8d0d0"/>
<path d="M36.500 40.500 l3.500 0.500 l-0.500 3 h-4z M42.500 41 l4-0.500 l1 3 h-4.500z" fill="#f4f2ea" stroke="#8a6a2a" stroke-width="0.400"/>
<path d="M31.500 17 h17.500 v7 q-8.500 7 -17.500 0z" fill="#f5d2a4"/>
<path d="M28 20 l-1-7 l3 2.500 l-1.500-8 l4 4 l1-9.500 l4 6.500 l3.500-7.500 l2 7.500 l5.500-6 l-1 7.500 l6-3.500 l-3.500 7 l4 0.500 l-4.500 4.500 l1 5 l-3-3 l-3-5 l-4 3.500 l-4-3 l-4 4 l-2 6z" fill="#f7d43c" stroke="#d9a520" stroke-width="0.400"/>
<path d="M33 12 l4-5 l2 4 l4-5 l1 6z" fill="#fbe66a"/>
<rect x="35.500" y="22.300" width="2.800" height="2" fill="#4aa3d8"/><rect x="43" y="22.300" width="2.800" height="2" fill="#4aa3d8"/>
<path d="M35 21.500 l4 1 M46.500 21.500 l-4 1" stroke="#8a5a20" stroke-width="0.600"/></svg><svg class="a" style="left:14px;top:67.5px" width="79.7" height="44.7" viewBox="0 0 79.7 44.7"><rect width="79.7" height="44.7" fill="#d2d2d3"/><path d="M18.5 19 q3 8 12 9 l3-6 q-8 0 -15-3z" fill="#a9cf52" stroke="#6f9a30" stroke-width="0.5"/><path d="M30 30 l-3 8 l1 5 l2 0 l0-4 l6-6z" fill="#9cc548" stroke="#6f9a30" stroke-width="0.5"/><path d="M42 29 l7 6 l9-4 l1 1.5 l-10 6 l-10-6z" fill="#9cc548" stroke="#6f9a30" stroke-width="0.5"/><ellipse cx="37.5" cy="24.5" rx="8.5" ry="9.5" fill="#b3d65c" stroke="#6f9a30" stroke-width="0.5" transform="rotate(20 37.5 24.5)"/><ellipse cx="40" cy="25" rx="4" ry="6" fill="#d4e88a" transform="rotate(20 40 25)"/><path d="M36 8 q0-7 8-6 q4 0 5 4 q5-1 5.5 3 q0.5 4 -4 5 l-6 1 q-1 3 -5 3 q-5-2 -3.500-10z" fill="#b3d65c" stroke="#6f9a30" stroke-width="0.5"/><path d="M44 14 q5 1 9-3" stroke="#4a6a20" stroke-width="0.6" fill="none"/><ellipse cx="42.500" cy="8" rx="2.300" ry="2.800" fill="#fff"/><ellipse cx="43" cy="8.2" rx="1.500" ry="2" fill="#3f8fd8"/><path d="M27 43 l1.500-3 l1.500 3z" fill="#fff"/></svg><svg class="a" style="left:96px;top:67.5px" width="79.7" height="44.7" viewBox="0 0 79.7 44.7"><rect width="79.7" height="44.7" fill="#d2d2d3"/><path d="M52 28 q6-6 3-13 q-1-2.500 -3-3.500" stroke="#333" stroke-width="0.7" fill="none"/><path d="M36 22 q-2 8 0 18 l-2 3 h5 l1-4 h6 l1 4 h4 l-1-3 h3 l1 3 h4 l0-8 q0-9 -8-9 l-8-1 z" fill="#fafafa" stroke="#333" stroke-width="0.5"/><path d="M24 3 q-5 2 -3 8 q2 5 8 6 l3 0 q1 4 5 5 q6-2 6-10 q0-9 -8-10 q-6-1 -11 1z" fill="#fafafa" stroke="#333" stroke-width="0.5"/><path d="M38 5 q5 3 4 12 q-1 4 -4 4 q-2-6 -3-12z" fill="#222"/><circle cx="23.500" cy="5.500" r="2" fill="#111"/><circle cx="34" cy="6" r="1.500" fill="#fff" stroke="#333" stroke-width="0.5"/><path d="M33.500 24.500 l8-2 l0.500 2 l-7.500 2.500z" fill="#a03a6a"/><ellipse cx="44" cy="29" rx="2.500" ry="2" fill="#222"/><ellipse cx="50" cy="27.500" rx="2" ry="1.500" fill="#222"/><ellipse cx="47" cy="34" rx="2.500" ry="1.500" fill="#222"/><ellipse cx="38.500" cy="33" rx="1.500" ry="3" fill="#222"/></svg><svg class="a" style="left:14px;top:114.6px" width="79.7" height="44.7" viewBox="0 0 79.7 44.7"><rect width="79.7" height="44.7" fill="#d2d2d3"/><path d="M16.700 32 h45.600 v12.700 h-45.600z" fill="#e9e9e9"/><rect x="16.700" y="32" width="5" height="12.700" fill="#c8c8c8"/><rect x="57.300" y="32" width="5" height="12.700" fill="#c8c8c8"/><path d="M8 24 h63.400 q-3 8 -12 8 h-39.400 q-9 0 -12-8z" fill="#f7f7f7"/><path d="M32 24 q0-8 7-9 q7 1 8 9z" fill="#3c3c3c"/><circle cx="38.700" cy="9.500" r="4.200" fill="#e9a57c"/><ellipse cx="38.500" cy="3.500" rx="5.500" ry="2.600" fill="#16181c"/><path d="M35 8 h7" stroke="#f4e0d0" stroke-width="1.200"/><rect x="35.600" y="18.400" width="15.400" height="11" rx="0.800" fill="#8e8e8e" stroke="#6a6a6a" stroke-width="0.400"/><path d="M32.500 21 l3 7 l2-0.500 l-2.500-7z" fill="#e9a57c"/></svg><svg class="a" style="left:96px;top:114.6px" width="79.7" height="44.7" viewBox="0 0 79.7 44.7"><rect width="79.7" height="44.7" fill="#d2d2d3"/><path d="M31 34 q-5 2 -4 6 l4 3 q3-1 4-4 l6-3 l6 3 q5 2 8-1 q0-3 -4-4 l-8-4 h-8z" fill="#6e6e6e" stroke="#333" stroke-width="0.400"/><ellipse cx="41.500" cy="32" rx="5" ry="6.500" fill="#f4f4f4"/><path d="M30 27 l-5 2 l1 2 l6-1z M50 27 l5 1 l-0.500 2 l-5 0z" fill="#6e6e6e"/><path d="M29 8 q-2-6 3-7.500 q4 3 6 7 q4-1 7 0 q3-4 7-3.500 q2 5 -1 9 q3 5 2 9 q-3 5 -12 5 q-11 0 -15-7 q0-5 3-12z" fill="#747474" stroke="#333" stroke-width="0.400"/><path d="M31.500 3.500 q-1.500 4 0 7.500 l4.500-2.500 q-2-3.500 -4.500-5z" fill="#f0f0f0"/><path d="M50.500 6.500 q1.500 3 0 6 l-3.500-2.500 q1.500-2.500 3.500-3.500z" fill="#e0e0e0"/><path d="M38 8 l1 4 M41 7.500 l0 4 M44 8 l-1 4" stroke="#444" stroke-width="0.800"/><path d="M36 22 q5-3 10 0 q1 5 -5 6 q-6-1 -5-6z" fill="#f4f4f4"/><ellipse cx="35.500" cy="21" rx="2.300" ry="2" fill="#6ab8f0"/><ellipse cx="47.500" cy="21.500" rx="2" ry="1.800" fill="#6ab8f0"/><path d="M40.500 23 l2 0 l-1 1.300z" fill="#e06070"/></svg><svg class="a" style="left:14px;top:161.7px" width="79.7" height="44.7" viewBox="0 0 79.7 44.7"><rect width="79.7" height="44.7" fill="#d2d2d3"/><path d="M24 20 q-2 6 2 8 h22 q3-4 0-9z" fill="#f2c53d"/><ellipse cx="31" cy="24.500" rx="3" ry="2.500" fill="#fff3b0"/><ellipse cx="38" cy="25" rx="3" ry="2.500" fill="#fff3b0"/><ellipse cx="44" cy="24.500" rx="2.500" ry="2.500" fill="#fff3b0"/><path d="M22.300 13 a13 11.500 0 0 1 26 0 q0 5 -2 8 q-6 2.500 -11-0.500 q-5 3 -11 0.500 q-2-3 -2-8z" fill="#5a2f2b"/><path d="M22.500 13.500 q13 3 25.600 0 v3 q-13 3 -25.600 0z" fill="#6d3a35"/><path d="M35.300 2 v5" stroke="#4a2522" stroke-width="0.800"/><path d="M47 24 l5-6 l1.500 1.500 l-4 6z" fill="#2f8a3a"/><path d="M52 20 q5 0 6 5 M51 22 q4 1 5 5" stroke="#eee" stroke-width="0.600" fill="none"/></svg><svg class="a" style="left:96px;top:161.7px" width="79.7" height="44.7" viewBox="0 0 79.7 44.7"><rect width="79.7" height="44.7" fill="#d2d2d3"/><path d="M40 3.500 v4.500 M34.500 5 l1.500 4 M45.500 5 l-1.300 4 M30 9 l2.500 3.500 M49.500 8.500 l-2 3.500" stroke="#9ad0f6" stroke-width="0.600"/><circle cx="39" cy="22" r="7" fill="#3fa0ee"/><ellipse cx="39" cy="24" rx="3.300" ry="3" fill="#1a1a22"/><ellipse cx="39" cy="25.500" rx="2" ry="1.200" fill="#c0504a"/><path d="M35 19 l2.500 1 M43 19 l-2.500 1" stroke="#1a4a80" stroke-width="0.600"/><path d="M46 24 q6 1 10-4 l1 2 l1-3 M32 24 q-6 2 -10 1 l-1-2" stroke="#3fa0ee" stroke-width="1.500" fill="none"/></svg></div><div class="a" style="left:182.5px;top:282px;width:2px;height:17px;background:#5a5a5a;border-radius:1px"></div>
<span class="t" style="left:128.800px;top:371px;font-size:8.500px;line-height:12px;color:#fff">Show next</span><svg class="a" style="left:169.500px;top:373.500px" width="7" height="8" viewBox="0 0 7 8"><path d="M3.500 0.500 V6.500 M1 4.300 L3.500 6.800 L6 4.300" fill="none" stroke="#e8e8e8" stroke-width="1"/></svg>
<div class="a" style="left:0;top:397px;width:185px;height:1px;background:#262626"></div>
<svg class="a" style="left:9px;top:407px" width="8" height="8" viewBox="0 0 8 8"><path d="M2.5 1 L5.5 4 L2.5 7" fill="none" stroke="#bbb" stroke-width="1"/></svg>
<span class="t" style="left:21.5px;top:405px;font-size:8.800px;line-height:12px;font-weight:bold;color:#eee">Static</span>
<div class="a" style="left:0;top:422.5px;width:185px;height:1px;background:#262626"></div>
<svg class="a" style="left:9px;top:432.5px" width="8" height="8" viewBox="0 0 8 8"><path d="M2.5 1 L5.5 4 L2.5 7" fill="none" stroke="#bbb" stroke-width="1"/></svg>
<span class="t" style="left:21.5px;top:430.5px;font-size:8.800px;line-height:12px;font-weight:bold;color:#eee">Sound clips</span>
<div class="a" style="left:0;top:448px;width:185px;height:1px;background:#262626"></div>
<div class="a" style="left:0;top:456px;width:185px;height:1px;background:#262626"></div>
<svg class="a" style="left:14px;top:461px" width="12" height="11" viewBox="0 0 12 11"><path d="M3 7.5 A2.6 2.6 0 0 1 3 2.6 A3.2 3.2 0 0 1 9 2.6 A2.5 2.5 0 0 1 9 7.5 Z" fill="#555"/><path d="M6 5 V10 M4.5 8.5 L6 10 L7.5 8.5" stroke="#555" stroke-width="1" fill="none"/></svg>
<svg class="a" style="left:165px;top:461px" width="10" height="12" viewBox="0 0 10 12"><path d="M0.5 2 H9.5 M3.5 1 H6.5" stroke="#ddd" stroke-width="1.2"/><path d="M1.3 3.3 H8.7 L8 11.5 H2 Z" fill="#ddd"/><path d="M3.5 4.5 V10 M5 4.5 V10 M6.5 4.5 V10" stroke="#444" stroke-width="0.6"/></svg>
</div>
</body></html>
